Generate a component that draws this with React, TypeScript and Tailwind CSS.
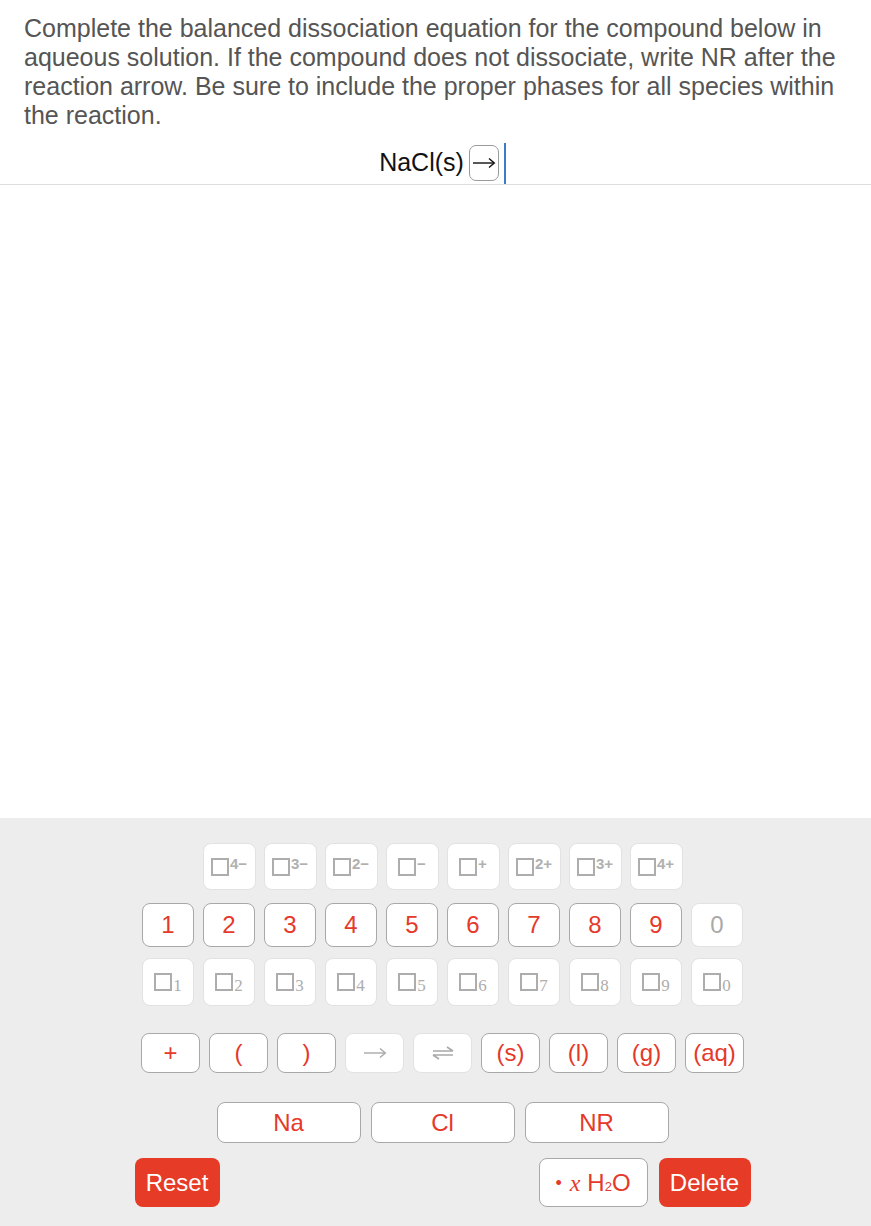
import React from 'react';
import clsx from 'clsx';

const RED = 'text-[#e5392a]';

// empty placeholder square used on the charge / subscript keys
const Sq = () => <span className="inline-block w-[18px] h-[18px] border-2 border-[#adadad]" />;

const Arrow = ({ className }: { className?: string }) => (
  <svg width="24" height="12" viewBox="0 0 24 12" className={className} fill="none" stroke="currentColor" strokeWidth="1.4">
    <path d="M1 6h21" />
    <path d="M17 1.5 22.3 6 17 10.5" />
  </svg>
);

const Equilibrium = () => (
  <svg width="22" height="14" viewBox="0 0 22 14" fill="none" stroke="currentColor" strokeWidth="1.6">
    <path d="M1 5h20M15 1l6 4" />
    <path d="M1 9h20M7 13 1 9" />
  </svg>
);

const Key = ({
  children,
  active = true,
  className,
}: {
  children: React.ReactNode;
  active?: boolean;
  className?: string;
}) => (
  <div
    className={clsx(
      'flex items-center justify-center rounded-[8px] bg-white text-[24px] leading-none',
      active ? 'border border-[#a8a8a8] ' + RED : 'border border-[#e2e2e2] text-[#a9a9a9]',
      className
    )}
  >
    {children}
  </div>
);

const charges = ['4−', '3−', '2−', '−', '+', '2+', '3+', '4+'];
const digits = ['1', '2', '3', '4', '5', '6', '7', '8', '9', '0'];

export default function App() {
  return (
    <div className="font-['Liberation_Sans',Arial,sans-serif] bg-white">
      <div className="h-[818px]">
        <p className="px-6 pt-[14px] pb-[2px] text-[25px] leading-[29px] text-[#555]">
          Complete the balanced dissociation equation for the compound below in aqueous solution. If the compound does
          not dissociate, write NR after the reaction arrow. Be sure to include the proper phases for all species within
          the reaction.
        </p>

        {/* equation */}
        <div className="flex h-[53px] items-center justify-center pl-[14px] pt-[10px] border-b border-[#dedede]">
          <span className="text-[25px] text-[#111]">NaCl(s)</span>
          <span className="ml-[5px] flex h-[36px] w-[30px] items-center justify-center rounded-[7px] border border-[#9a9a9a] text-[#111]">
            <Arrow />
          </span>
          <span className="ml-[5px] h-[41px] w-[2px] bg-[#3a7dc9]" />
        </div>
      </div>

      {/* keypad */}
      <div className="h-[408px] bg-[#ededed] pl-[14px] flex justify-center">
        <div className="w-[616px] flex flex-col items-center pt-[25px]">
          <div className="flex gap-[8px]">
            {charges.map(c => (
              <Key key={c} active={false} className="w-[53px] h-[47px]">
                <Sq />
                <span className="self-start mt-[12px] ml-[1px] text-[15px] font-bold text-[#b0b0b0]">{c}</span>
              </Key>
            ))}
          </div>

          <div className="mt-[13px] flex gap-[9px]">
            {digits.map(d => (
              <Key key={d} active={d !== '0'} className="w-[52px] h-[44px]">
                {d}
              </Key>
            ))}
          </div>

          <div className="mt-[11px] flex gap-[9px]">
            {digits.map(d => (
              <Key key={d} active={false} className="w-[52px] h-[48px]">
                <Sq />
                <span className="self-end mb-[11px] ml-[1px] font-['Liberation_Serif',serif] text-[17px] text-[#adadad]">
                  {d}
                </span>
              </Key>
            ))}
          </div>

          <div className="mt-[27px] flex gap-[9px]">
            <Key className="w-[59px] h-[40px]">+</Key>
            <Key className="w-[59px] h-[40px]">(</Key>
            <Key className="w-[59px] h-[40px]">)</Key>
            <Key active={false} className="w-[59px] h-[40px]">
              <Arrow />
            </Key>
            <Key active={false} className="w-[59px] h-[40px]">
              <Equilibrium />
            </Key>
            <Key className="w-[59px] h-[40px]">(s)</Key>
            <Key className="w-[59px] h-[40px]">(l)</Key>
            <Key className="w-[59px] h-[40px]">(g)</Key>
            <Key className="w-[59px] h-[40px]">(aq)</Key>
          </div>

          <div className="mt-[29px] flex gap-[10px]">
            <Key className="w-[144px] h-[41px]">Na</Key>
            <Key className="w-[144px] h-[41px]">Cl</Key>
            <Key className="w-[144px] h-[41px]">NR</Key>
          </div>

          <div className="mt-[15px] flex w-full items-center">
            <button className="h-[49px] w-[85px] rounded-[8px] bg-[#e53b27] text-[24px] text-white">Reset</button>
            <div className="flex-1" />
            <Key className="w-[109px] h-[49px]">
              <span className="text-[18px] mr-[8px]">•</span>
              <span className="font-['Liberation_Serif',serif] italic mr-[7px]">x</span>
              <span>H</span>
              <span className="text-[13px] self-end mb-[13px]">2</span>
              <span>O</span>
            </Key>
            <button className="ml-[11px] h-[49px] w-[92px] rounded-[8px] bg-[#e53b27] text-[24px] text-white">
              Delete
            </button>
          </div>
        </div>
      </div>
    </div>
  );
}
